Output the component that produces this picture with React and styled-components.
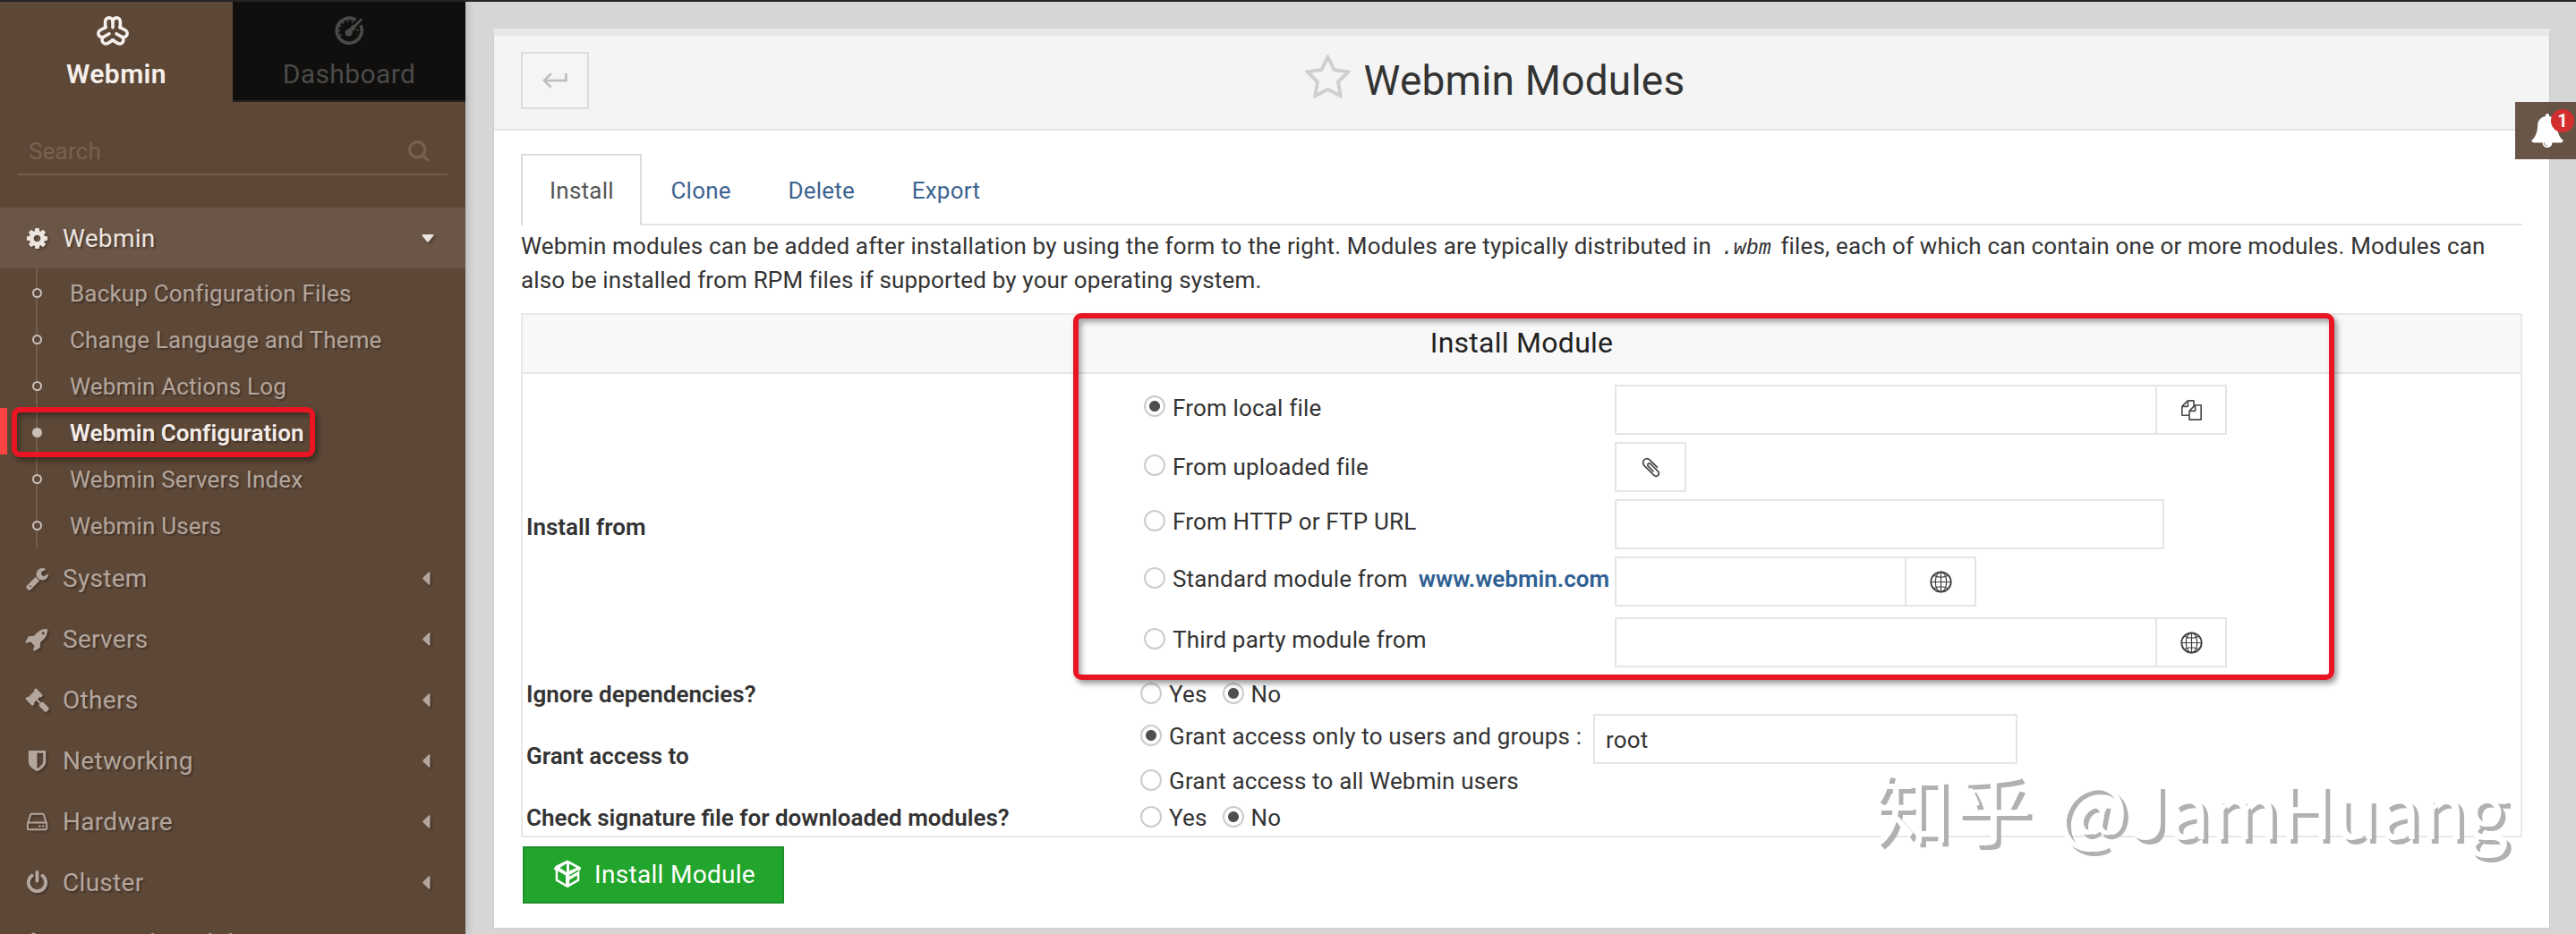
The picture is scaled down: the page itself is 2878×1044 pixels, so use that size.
import React, { useState } from 'react'
import styled, { createGlobalStyle, css } from 'styled-components'
import { FaPuzzlePiece } from 'react-icons/fa'

const GlobalStyle = createGlobalStyle`
  * {
    box-sizing: border-box;
  }
  body {
    margin: 0;
    background-color: #d6d6d6;
    color: #333;
    font-family: Roboto, sans-serif;
    font-size: 26px;
    letter-spacing: 0.17px;
    overflow: hidden;
  }
`;

const Page = styled.div`
  position: relative;
  display: flex;
  height: 1044px;
  border-top: 2px solid #262424;
  overflow: hidden;
`;

/* ---- sidebar ---- */

const Sidebar = styled.aside`
  width: 520px;
  flex-shrink: 0;
  background-color: #5d4838;
  box-shadow: 0 0 10px rgba(0, 0, 0, 0.25);
  color: #b3a69d;
`;
const Switcher = styled.div`
  display: flex;
  height: 112px;
`;
const SwitchTab = styled.div`
  flex: 1;
  display: flex;
  flex-direction: column;
  align-items: center;
  padding-top: 16px;
  font-size: 30px;
  line-height: 36px;
  letter-spacing: 0.4px;
  font-weight: ${props => props.$active ? 600 : 400};
  color: ${props => props.$active ? '#f6efeb' : '#4b4a49'};
  background-color: ${props => props.$active ? 'transparent' : '#100f0d'};
  border-bottom: ${props => props.$active ? 'none' : '2px solid #2a2221'};

  svg {
    margin: 0 ${props => props.$active ? '8px' : '0'} 14px 0;
  }
`;
const SearchBox = styled.div`
  display: flex;
  align-items: center;
  justify-content: space-between;
  height: 52px;
  margin: 30px 20px 36px;
  padding: 0 20px 0 12px;
  border-bottom: 2px solid #735c4b;
  color: #78614f;
`;
const MenuRow = styled.div`
  display: flex;
  align-items: center;
  height: 68px;
  padding: 0 39px 0 28px;
  font-size: 28px;
  letter-spacing: 0.3px;
  text-shadow: 2px 2px 2px rgba(0, 0, 0, 0.3);
  color: ${props => props.$open ? '#ece5e0' : '#b3a69d'};
  background-color: ${props => props.$open ? '#6b5546' : 'transparent'};

  svg {
    filter: drop-shadow(2px 2px 1px rgba(0, 0, 0, 0.25));
  }
`;
const MenuIcon = styled.span`
  width: 42px;
  display: flex;
  align-items: center;
`;
const MenuLabel = styled.span`
  flex: 1;
`;
const SubMenu = styled.ul`
  position: relative;
  margin: 0;
  padding: 0;
  list-style: none;

  &::before {
    content: '';
    position: absolute;
    left: 40px;
    top: 0;
    bottom: 0;
    width: 1.5px;
    background-color: #735d4d;
  }
`;
const SubItem = styled.li`
  position: relative;
  display: flex;
  align-items: center;
  height: 52px;
  padding: 3px 0 0 ${props => props.$active ? '28px' : '36px'};
  text-shadow: 2px 2px 2px rgba(0, 0, 0, 0.3);
  ${props => props.$active && css`
    border-left: 8px solid #ff4541;
    color: #f3ece8;
    font-weight: 600;
    letter-spacing: 0.05px;
  `}
`;
const Dot = styled.span`
  width: 11px;
  height: 11px;
  margin-right: 31px;
  border: 2px solid #c9bfb8;
  border-radius: 50%;
  background-color: ${props => props.$active ? '#c9bfb8' : '#5d4838'};
`;

/* ---- content ---- */

const Panel = styled.main`
  width: 2298px;
  height: 1006px;
  margin: 30px 0 0 31px;
  border: 1px solid #cbcbcb;
  border-top: 8px solid #e8e8e8;
  background-color: #fff;
`;
const PanelHeader = styled.header`
  display: grid;
  grid-template-columns: 76px 1fr 138px;
  height: 106px;
  padding: 18px 30px 0;
  background-color: #f4f4f4;
  border-bottom: 2px solid #e4e4e4;
`;
const BackButton = styled.button`
  display: flex;
  align-items: center;
  justify-content: center;
  height: 64px;
  padding: 0;
  border: 2px solid #dcdcdc;
  background-color: #f5f5f5;
`;
const Title = styled.h1`
  display: flex;
  align-items: center;
  justify-content: center;
  gap: 13px;
  height: 64px;
  margin: 0;
  font-size: 46px;
  font-weight: 400;
  letter-spacing: 0.23px;

  svg {
    margin-bottom: 6px;
  }
`;
const PanelBody = styled.div`
  padding: 26px 30px 0;
`;
const Tabs = styled.div`
  display: flex;
  height: 80px;
  border-bottom: 2px solid #e6e6e6;
`;
const Tab = styled.a`
  height: 80px;
  padding: 24px 29.5px 0 30px;
  line-height: 31px;
  border: 2px solid transparent;
  border-bottom: none;
  letter-spacing: 0.25px;
  color: #3d6490;
  ${props => props.$active && css`
    border-color: #dcdcdc;
    background-color: #fff;
    color: #555;
  `}
`;
const Intro = styled.p`
  margin: 0;
  padding: 4px 0 18px;
  line-height: 38px;
  letter-spacing: 0.16px;
`;
const Code = styled.code`
  padding: 0 4px;
  font: italic 23.4px/1 "Liberation Mono", monospace;
  letter-spacing: 0;
`;
const FormTable = styled.section`
  height: 586px;
  border: 2px solid #e8e8e8;
`;
const TableTitle = styled.h2`
  height: 66px;
  margin: 0;
  border-bottom: 2px solid #e8e8e8;
  background-color: #f8f8f8;
  font-size: 32px;
  font-weight: 400;
  line-height: 62px;
  letter-spacing: 0.27px;
  text-align: center;
  color: #222;
`;
const FormRow = styled.div`
  display: grid;
  grid-template-columns: 686px 1fr;
  align-items: center;
  height: ${props => props.$height}px;
  padding-left: 4px;
`;
const RowLabel = styled.div`
  font-weight: 600;
  letter-spacing: 0;
`;
const Options = styled.div`
  display: flex;
  align-items: center;
`;
const SourceList = styled.div`
  display: grid;
  grid-template-columns: 526px auto;
  grid-template-rows: 56px 56px 56px 56px 60px;
  row-gap: 8px;
  align-items: end;
  justify-content: start;
  padding: 0 0 2px 4px;
`;
const RadioLabel = styled.label`
  display: flex;
  align-items: center;
  height: ${props => props.$height || 56}px;
  width: ${props => props.$width ? props.$width + 'px' : 'auto'};
  padding-bottom: ${props => props.$lift || 0}px;
  margin-right: ${props => props.$gap || 0}px;
  white-space: nowrap;
`;
const Radio = styled.input`
  appearance: none;
  width: 24px;
  height: 24px;
  flex-shrink: 0;
  margin: 0 8px 3px 0;
  border: 2px solid #ccc;
  border-radius: 50%;
  background: #fff;

  &:checked {
    background: radial-gradient(circle, #4f4f4f 5.5px, #fff 6.5px);
  }
`;
const SiteLink = styled.a`
  margin-left: 12px;
  font-weight: 600;
  letter-spacing: 0;
  color: #2f6093;
`;
const Field = styled.div`
  display: flex;
`;
const TextInput = styled.input`
  width: ${props => props.$width}px;
  height: 56px;
  padding: 2px 12px 0;
  border: 2px solid #e5e5e5;
  border-radius: 0;
  outline: none;
  font: inherit;
  letter-spacing: inherit;
  color: #333;
  background-color: #fff;
`;
const PickButton = styled.button`
  display: flex;
  align-items: center;
  justify-content: center;
  width: 80px;
  height: 56px;
  padding: 0;
  margin-left: ${props => props.$alone ? 0 : '-2px'};
  border: 2px solid #e5e5e5;
  background-color: #fff;
  color: #4a4a4a;
`;
const SubmitButton = styled.button`
  display: flex;
  align-items: center;
  width: 292px;
  height: 64px;
  margin: 10px 0 0 2px;
  padding: 0 0 2px 32px;
  border: 2px solid #1f8f2b;
  background-color: #22a52c;
  color: #fff;
  font: 400 28px Roboto, sans-serif;
  letter-spacing: 0.3px;

  svg {
    margin-right: 14px;
  }
`;

/* ---- overlays ---- */

const Notification = styled.div`
  position: absolute;
  top: 112px;
  right: 0;
  width: 68px;
  height: 64px;
  padding: 13px 0 0 17px;
  background-color: rgba(93, 72, 58, 0.92);
  color: #fff;
`;
const Badge = styled.span`
  position: absolute;
  top: 8px;
  right: 2px;
  width: 26px;
  height: 26px;
  border-radius: 50%;
  background-color: #d32f2f;
  font-size: 20px;
  font-weight: 600;
  line-height: 26px;
  text-align: center;
`;
const Highlight = styled.div`
  position: absolute;
  left: ${props => props.$x}px;
  top: ${props => props.$y}px;
  width: ${props => props.$w}px;
  height: ${props => props.$h}px;
  border: 6px solid #ea1523;
  border-radius: 9px;
  box-shadow: 3px 4px 6px rgba(0, 0, 0, 0.4), inset 3px 4px 6px rgba(0, 0, 0, 0.35);
  pointer-events: none;
`;
const Watermark = styled.div`
  position: absolute;
  left: 2093px;
  top: 845px;
  font-family: "Noto Sans CJK SC", sans-serif;
  font-size: 83.3px;
  line-height: 106px;
  letter-spacing: 0;
  word-spacing: 7px;
  white-space: pre;
  color: #fff;
  text-shadow: 5px 5px 0 #b1b1b1;
  pointer-events: none;
`;
const WatermarkSite = styled.span`
  font-size: 87px;
  letter-spacing: 3px;
`;

/* ---- icons ---- */

// solid glyphs drawn on a 1792 unit grid
const glyphs = {
    cog: 'M1152 896q0-106-75-181t-181-75-181 75-75 181 75 181 181 75 181-75 75-181zm512-109v222q0 12-8 23t-20 13l-185 28q-19 54-39 91 35 50 107 138 10 12 10 25t-9 23q-27 37-99 108t-94 71q-12 0-26-9l-138-108q-44 23-91 38-16 136-29 186-7 28-36 28h-222q-14 0-24.5-8.5t-11.5-21.5l-28-184q-49-16-90-37l-141 107q-10 9-25 9-14 0-25-11-126-114-165-168-7-10-7-23 0-12 8-23 15-21 51-66.5t54-70.5q-27-50-41-99l-183-27q-13-2-21-12.5t-8-23.5v-222q0-12 8-23t19-13l186-28q14-46 39-92-40-57-107-138-10-12-10-24 0-10 9-23 26-36 98.5-107.5t94.5-71.5q13 0 26 10l138 107q44-23 91-38 16-136 29-186 7-28 36-28h222q14 0 24.5 8.5t11.5 21.5l28 184q49 16 90 37l142-107q9-9 24-9 13 0 25 10 129 119 165 170 7 8 7 22 0 12-8 23-15 21-51 66.5t-54 70.5q26 50 41 98l183 28q13 2 21 12.5t8 23.5z',
    wrench: 'M448 1472q0-26-19-45t-45-19-45 19-19 45 19 45 45 19 45-19 19-45zm644-420l-682 682q-37 37-90 37-52 0-91-37l-106-108q-38-36-38-90 0-53 38-91l681-681q39 98 114.5 173.5t173.5 114.5zm634-435q0 39-23 106-47 134-164.5 217.5t-258.5 83.5q-185 0-316.5-131.5t-131.5-316.5 131.5-316.5 316.5-131.5q58 0 121.5 16.5t107.5 46.5q16 11 16 28t-16 28l-293 169v224l193 107q5-3 79-48.5t135.5-81 70.5-35.5q15 0 23.5 10t8.5 25z',
    rocket: 'M1440 448q0-40-28-68t-68-28-68 28-28 68 28 68 68 28 68-28 28-68zm224-288q0 249-75.5 430.5t-253.5 360.5q-81 80-195 176l-20 379q-2 16-16 26l-384 224q-7 4-16 4-12 0-23-9l-64-64q-13-14-8-32l85-276-281-281-276 85q-3 1-9 1-14 0-23-9l-64-64q-17-19-5-39l224-384q10-14 26-16l379-20q96-114 176-195 188-187 358-258t431-71q14 0 24 9.5t10 22.5z',
    gavel: 'M1771 1536q0 53-37 90l-107 108q-39 37-91 37-53 0-90-37l-363-364q-38-36-38-90 0-53 43-96l-256-256-126 126q-14 14-34 14t-34-14q2 2 12.5 12t12.5 13 10 11.5 10 13.5 6 13.5 5.5 16.5 1.5 18q0 38-28 68-3 3-16.5 18t-19 20.5-18.5 16.5-22 15.5-22 9-26 4.5q-40 0-68-28l-408-408q-28-28-28-68 0-13 4.5-26t9-22 15.5-22 16.5-18.5 20.5-19 18-16.5q30-28 68-28 10 0 18 1.5t16.5 5.5 13.5 6 13.5 10 11.5 10 13 12.5 12 12.5q-14-14-14-34t14-34l348-348q14-14 34-14t34 14q-2-2-12.5-12t-12.5-13-10-11.5-10-13.5-6-13.5-5.5-16.5-1.5-18q0-38 28-68 3-3 16.5-18t19-20.5 18.5-16.5 22-15.5 22-9 26-4.5q40 0 68 28l408 408q28 28 28 68 0 13-4.5 26t-9 22-15.5 22-16.5 18.5-20.5 19-18 16.5q-30 28-68 28-10 0-18-1.5t-16.5-5.5-13.5-6-13.5-10-11.5-10-13-12.5-12-12.5q14 14 14 34t-14 34l-126 126 256 256q43-43 96-43 52 0 91 37l363 363q37 39 37 91z',
    shield: 'M1344 960v-640h-448v1137q119-63 213-137 235-184 235-360zm192-768v768q0 86-33.5 170.5t-83 150-118 127.5-126.5 103-121 77.5-89.5 49.5-42.5 20q-12 6-26 6t-26-6q-16-7-42.5-20t-89.5-49.5-121-77.5-126.5-103-118-127.5-83-150-33.5-170.5v-768q0-26 19-45t45-19h1152q26 0 45 19t19 45z',
    hdd: 'M1168 1216q0 33-23.5 56.5t-56.5 23.5-56.5-23.5-23.5-56.5 23.5-56.5 56.5-23.5 56.5 23.5 23.5 56.5zm256 0q0 33-23.5 56.5t-56.5 23.5-56.5-23.5-23.5-56.5 23.5-56.5 56.5-23.5 56.5 23.5 23.5 56.5zm112 160v-320q0-13-9.5-22.5t-22.5-9.5h-1216q-13 0-22.5 9.5t-9.5 22.5v320q0 13 9.5 22.5t22.5 9.5h1216q13 0 22.5-9.5t9.5-22.5zm-1230-480h1180l-157-482q-4-13-16-21.5t-26-8.5h-782q-14 0-26 8.5t-16 21.5zm1358 160v320q0 66-47 113t-113 47h-1216q-66 0-113-47t-47-113v-320q0-25 16-75l197-606q17-53 63-86t101-33h782q55 0 101 33t63 86l197 606q16 50 16 75z',
    power: 'M1664 896q0 156-61 298t-164 245-245 164-298 61-298-61-245-164-164-245-61-298q0-182 80.5-343t226.5-270q43-32 95.5-25t83.5 50q32 42 24.5 94.5t-49.5 84.5q-98 74-151.5 181t-53.5 228q0 104 40.5 198.5t109.5 163.5 163.5 109.5 198.5 40.5 198.5-40.5 163.5-109.5 109.5-163.5 40.5-198.5q0-121-53.5-228t-151.5-181q-42-32-49.5-84.5t24.5-94.5q31-43 84-50t95 25q146 109 226.5 270t80.5 343zm-640-768v640q0 52-38 90t-90 38-90-38-38-90v-640q0-52 38-90t90-38 90 38 38 90z',
    bell: 'M912 1696q0-16-16-16-59 0-101.5-42.5t-42.5-101.5q0-16-16-16t-16 16q0 73 51.5 124.5t124.5 51.5q16 0 16-16zm816-288q0 52-38 90t-90 38h-448q0 106-75 181t-181 75-181-75-75-181h-448q-52 0-90-38t-38-90q50-42 91-88t85-119.5 74.5-158.5 50-206 19.5-260q0-152 117-282.5t307-158.5q-8-19-8-39 0-40 28-68t68-28 68 28 28 68q0 20-8 39 190 28 307 158.5t117 282.5q0 139 19.5 260t50 206 74.5 158.5 85 119.5 91 88z',
    star: 'M1201 1004l306-297-422-62-189-382-189 382-422 62 306 297-73 421 378-199 377 199zm527-357q0 22-26 48l-363 354 86 500q1 7 1 20 0 50-41 50-19 0-40-12l-449-236-449 236q-22 12-40 12-21 0-31.5-14.5t-10.5-35.5q0-6 2-20l86-500-364-354q-25-27-25-48 0-37 56-46l502-73 225-455q19-41 49-41t49 41l225 455 502 73q56 9 56 46z',
    copy: 'M1696 384q40 0 68 28t28 68v1216q0 40-28 68t-68 28h-960q-40 0-68-28t-28-68v-288h-544q-40 0-68-28t-28-68v-672q0-40 20-88t48-76l408-408q28-28 76-48t88-20h416q40 0 68 28t28 68v328q68-40 128-40h416zm-544 213l-299 299h299v-299zm-640-384l-299 299h299v-299zm196 647l316-316v-416h-384v416q0 40-28 68t-68 28h-416v640h512v-256q0-40 20-88t48-76zm956 804v-1152h-384v416q0 40-28 68t-68 28h-416v640h896z',
    clip: 'M1596 1385q0 117-79 196t-196 79q-135 0-235-100l-777-776q-113-115-113-271 0-159 110-270t269-111q158 0 273 113l605 606q10 10 10 22 0 16-30.5 46.5t-46.5 30.5q-13 0-23-10l-606-607q-79-77-181-77-106 0-179 75t-73 181q0 105 76 181l776 777q63 63 145 63 64 0 106-42t42-106q0-82-63-145l-581-581q-26-24-60-24-29 0-48 19t-19 48q0 32 25 59l410 410q10 10 10 22 0 16-31 47t-47 31q-12 0-22-10l-410-410q-63-61-63-149 0-82 57-139t139-57q88 0 149 63l581 581q100 98 100 235z',
};

const Glyph = ({ name, size, color }) => (
    <svg width={size} height={size} viewBox="0 0 1792 1792" fill={color || 'currentColor'}>
        <path d={glyphs[name]} />
    </svg>
);

const WebminLogo = () => (
    <svg width="36" height="33" viewBox="0 0 36 33" fill="none" stroke="#f6efeb" strokeWidth="3.6" strokeLinecap="round" strokeLinejoin="round">
        {[0, 120, 240].map((angle) => (
            <g key={angle} transform={`rotate(${angle} 18 17.4)`}>
                <path d="M9.6 13.2V6.1a4.2 4.2 0 0 1 8.4 0a4.2 4.2 0 0 1 8.4 0v7.1" />
                <path d="M18 6.1v6.6" />
            </g>
        ))}
    </svg>
);

const GaugeIcon = () => (
    <svg width="33" height="33" viewBox="0 0 33 33" fill="none" stroke="#4b4a49">
        <path d="M23.5 4.2A14 14 0 1 0 28.9 10.2" strokeWidth="3.6" />
        <path d="M29.5 4L17.5 16" strokeWidth="2.6" strokeLinecap="round" />
        <path d="M21 12.5L16 17.5" strokeWidth="5" strokeLinecap="round" />
        <circle cx="15.5" cy="18.5" r="4" fill="#4b4a49" stroke="none" />
        <path d="M7 22A10.4 10.4 0 0 1 20.5 6.8" strokeWidth="2" strokeDasharray="2 3.2" />
        <path d="M25.3 14.5A10 10 0 0 1 25 20" strokeWidth="2" strokeDasharray="2 3.2" />
    </svg>
);

const SearchIcon = () => (
    <svg width="24" height="24" viewBox="0 0 24 24" fill="none" stroke="currentColor" strokeWidth="3.2">
        <circle cx="10.2" cy="10.2" r="8.6" />
        <path d="M16.4 16.4L22.8 22.8" />
    </svg>
);

const ReturnIcon = () => (
    <svg width="28" height="18" viewBox="0 0 28 18" fill="none" stroke="#bcbcbc" strokeWidth="2.6">
        <path d="M26.4 1V9H2.4" />
        <path d="M9.6 1.4L2 9l7.6 7.6" />
    </svg>
);

const GlobeIcon = () => (
    <svg width="25" height="25" viewBox="0 0 25 25" fill="none" stroke="#3f3f3f" strokeWidth="1.2">
        <circle cx="12.5" cy="12.5" r="11.2" strokeWidth="1.8" />
        <ellipse cx="12.5" cy="12.5" rx="6.2" ry="11.2" />
        <path d="M12.5 1v23M1 12.5h23M4.2 5c4.6 3 12 3 16.6 0M4.2 20c4.6-3 12-3 16.6 0" />
    </svg>
);

const PackageIcon = () => (
    <svg width="32" height="32" viewBox="0 0 32 32">
        <path d="M16 0.5L31 8.6L31 10.5L29.3 12V23.4L16 31.3L2.7 23.4V12L0.6 10.4L3 6.8z" fill="#fff" />
        <path d="M15 4.2V14L7.4 9z" fill="#22a52c" />
        <path d="M18 4.4L26 9L18 12.6z" fill="#22a52c" />
        <path d="M5.2 12.4L14 17.4V27.2L5.2 22z" fill="#22a52c" />
        <path d="M18.2 17L28.2 11.2V13L18.2 18.8z" fill="#22a52c" />
        <path d="M18.2 22.4L26.8 17.4V22L18.2 27z" fill="#22a52c" />
    </svg>
);

const Caret = ({ open }) => open
    ? <svg width="14" height="9" viewBox="0 0 14 9" fill="currentColor"><path d="M1.4 0h11.2q1.6.6.4 2L8 8q-1 1-2 0L1 2Q-.2.6 1.4 0z" /></svg>
    : <svg width="9" height="15" viewBox="0 0 9 15" fill="currentColor"><path d="M8.5 1v13q-.6 1-1.6.4L.8 8.4q-.9-.9 0-1.8L6.9.6Q8-.1 8.5 1z" /></svg>;

const CaretSlot = styled.span`
  width: 14px;
  display: flex;
  justify-content: ${props => props.$open ? 'flex-start' : 'center'};
  margin-right: ${props => props.$open ? '-4px' : '-2px'};
`;

const subItems = [
    'Backup Configuration Files',
    'Change Language and Theme',
    'Webmin Actions Log',
    'Webmin Configuration',
    'Webmin Servers Index',
    'Webmin Users',
];

const categories = [
    { label: 'System', icon: 'wrench' },
    { label: 'Servers', icon: 'rocket' },
    { label: 'Others', icon: 'gavel' },
    { label: 'Networking', icon: 'shield' },
    { label: 'Hardware', icon: 'hdd' },
    { label: 'Cluster', icon: 'power' },
    { label: 'Un-used Modules' },
];

const sources = [
    { id: 'local', label: 'From local file', width: 606, icon: 'copy', lift: 5 },
    { id: 'upload', label: 'From uploaded file', icon: 'clip', lift: 1 },
    { id: 'url', label: 'From HTTP or FTP URL', width: 614, lift: 6 },
    { id: 'standard', label: 'Standard module from', link: 'www.webmin.com', width: 326, icon: 'globe', lift: 6 },
    { id: 'third', label: 'Third party module from', width: 606, icon: 'globe', lift: 6 },
];

const App = () => {

    const [source, setSource] = useState('local');
    const [ignore, setIgnore] = useState('no');
    const [grant, setGrant] = useState('some');
    const [check, setCheck] = useState('no');
    const [users, setUsers] = useState('root');

    const yesNo = (name, value, setValue) => (
        <Options>
            <RadioLabel $height={32} $gap={17}><Radio type="radio" name={name} checked={value === 'yes'} onChange={() => setValue('yes')} />Yes</RadioLabel>
            <RadioLabel $height={32}><Radio type="radio" name={name} checked={value === 'no'} onChange={() => setValue('no')} />No</RadioLabel>
        </Options>
    );

    return <Page>
        <GlobalStyle />
        <Sidebar>
            <Switcher>
                <SwitchTab $active><WebminLogo />Webmin</SwitchTab>
                <SwitchTab><GaugeIcon />Dashboard</SwitchTab>
            </Switcher>
            <SearchBox>Search<SearchIcon /></SearchBox>
            <MenuRow $open>
                <MenuIcon><Glyph name="cog" size={27} /></MenuIcon>
                <MenuLabel>Webmin</MenuLabel>
                <CaretSlot $open><Caret open /></CaretSlot>
            </MenuRow>
            <SubMenu>
                {subItems.map((item) => {
                    const active = item === 'Webmin Configuration';
                    return <SubItem key={item} $active={active}><Dot $active={active} />{item}</SubItem>
                })}
            </SubMenu>
            {categories.map((cat) => (
                <MenuRow key={cat.label}>
                    <MenuIcon>{cat.icon ? <Glyph name={cat.icon} size={27} /> : <FaPuzzlePiece size={26} />}</MenuIcon>
                    <MenuLabel>{cat.label}</MenuLabel>
                    <CaretSlot><Caret /></CaretSlot>
                </MenuRow>
            ))}
        </Sidebar>

        <Panel>
            <PanelHeader>
                <BackButton><ReturnIcon /></BackButton>
                <Title><Glyph name="star" size={55} color="#cfcfcf" />Webmin Modules</Title>
            </PanelHeader>
            <PanelBody>
                <Tabs>
                    <Tab $active>Install</Tab>
                    <Tab>Clone</Tab>
                    <Tab>Delete</Tab>
                    <Tab>Export</Tab>
                </Tabs>
                <Intro>
                    Webmin modules can be added after installation by using the form to the right. Modules are typically distributed in <Code>.wbm</Code> files, each of which can contain one or more modules. Modules can<br />
                    also be installed from RPM files if supported by your operating system.
                </Intro>
                <FormTable>
                    <TableTitle>Install Module</TableTitle>
                    <FormRow $height={342}>
                        <RowLabel>Install from</RowLabel>
                        <SourceList>
                            {sources.map((s) => (
                                <React.Fragment key={s.id}>
                                    <RadioLabel $lift={s.lift}>
                                        <Radio type="radio" name="source" checked={source === s.id} onChange={() => setSource(s.id)} />
                                        {s.label}
                                        {s.link && <SiteLink>{s.link}</SiteLink>}
                                    </RadioLabel>
                                    <Field>
                                        {s.width && <TextInput $width={s.width} />}
                                        {s.icon && <PickButton $alone={!s.width}>
                                            {s.icon === 'globe' ? <GlobeIcon /> : <Glyph name={s.icon} size={s.icon === 'copy' ? 23 : 25} />}
                                        </PickButton>}
                                    </Field>
                                </React.Fragment>
                            ))}
                        </SourceList>
                    </FormRow>
                    <FormRow $height={32}>
                        <RowLabel>Ignore dependencies?</RowLabel>
                        {yesNo('ignore', ignore, setIgnore)}
                    </FormRow>
                    <FormRow $height={106}>
                        <RowLabel>Grant access to</RowLabel>
                        <div>
                            <Options>
                                <RadioLabel $width={506} $lift={6}>
                                    <Radio type="radio" name="grant" checked={grant === 'some'} onChange={() => setGrant('some')} />
                                    Grant access only to users and groups :
                                </RadioLabel>
                                <TextInput $width={474} value={users} onChange={(e) => setUsers(e.target.value)} />
                            </Options>
                            <RadioLabel $height={38}>
                                <Radio type="radio" name="grant" checked={grant === 'all'} onChange={() => setGrant('all')} />
                                Grant access to all Webmin users
                            </RadioLabel>
                        </div>
                    </FormRow>
                    <FormRow $height={30}>
                        <RowLabel>Check signature file for downloaded modules?</RowLabel>
                        {yesNo('check', check, setCheck)}
                    </FormRow>
                </FormTable>
                <SubmitButton><PackageIcon />Install Module</SubmitButton>
            </PanelBody>
        </Panel>

        <Notification>
            <Glyph name="bell" size={38} />
            <Badge>1</Badge>
        </Notification>
        <Highlight $x={13} $y={453} $w={339} $h={56} />
        <Highlight $x={1199} $y={348} $w={1409} $h={410} />
        <Watermark><WatermarkSite>知乎</WatermarkSite> @JamHuang</Watermark>
    </Page>;
};

export default App
